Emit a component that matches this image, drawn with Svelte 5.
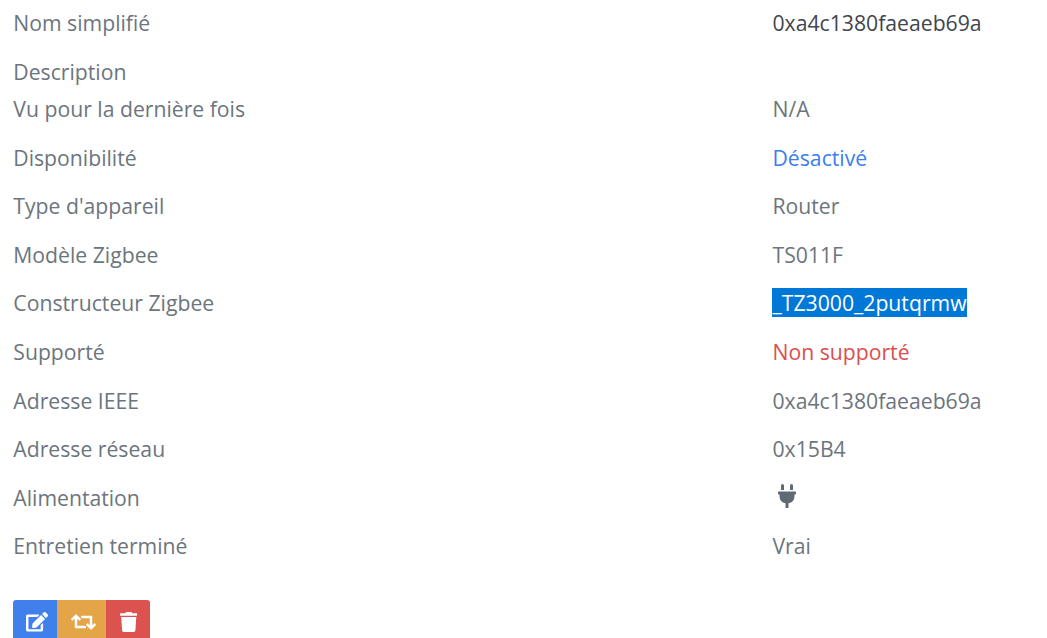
<script lang="ts">
  const rows = [
    { label: "Nom simplifié", value: "0xa4c1380faeaeb69a", kind: "dark" },
    { label: "Description", value: "", kind: "empty" },
    { label: "Vu pour la dernière fois", value: "N/A", kind: "" },
    { label: "Disponibilité", value: "Désactivé", kind: "blue" },
    { label: "Type d'appareil", value: "Router", kind: "" },
    { label: "Modèle Zigbee", value: "TS011F", kind: "" },
    { label: "Constructeur Zigbee", value: "_TZ3000_2putqrmw", kind: "selected" },
    { label: "Supporté", value: "Non supporté", kind: "red" },
    { label: "Adresse IEEE", value: "0xa4c1380faeaeb69a", kind: "" },
    { label: "Adresse réseau", value: "0x15B4", kind: "" },
    { label: "Alimentation", value: "", kind: "power" },
    { label: "Entretien terminé", value: "Vrai", kind: "" }
  ];
</script>

<div class="device">
  <dl class="info">
    {#each rows as row}
      <div class="row {row.kind}">
        <dt>{row.label}</dt>
        <dd>
          {#if row.kind === "power"}
            <svg class="plug" viewBox="0 0 384 512" aria-hidden="true">
              <path fill="currentColor" d="M320,32a32,32,0,0,0-64,0v96h64Zm48,128H16A16,16,0,0,0,0,176v32a16,16,0,0,0,16,16H32v32A160.07,160.07,0,0,0,160,412.8V512h64V412.8A160.07,160.07,0,0,0,352,256V224h16a16,16,0,0,0,16-16V176A16,16,0,0,0,368,160ZM128,32a32,32,0,0,0-64,0v96h64Z" />
            </svg>
          {:else if row.kind === "selected"}
            <span class="selection">{row.value}</span>
          {:else}
            {row.value}
          {/if}
        </dd>
      </div>
    {/each}
  </dl>

  <div class="actions">
    <button class="edit" aria-label="Modifier">
      <svg width="22" height="19.6" viewBox="0 0 576 512" aria-hidden="true">
        <path fill="currentColor" d="M402.6 83.2l90.2 90.2c3.8 3.8 3.8 10 0 13.8L274.4 405.6l-92.8 10.3c-12.4 1.4-22.9-9.1-21.5-21.5l10.3-92.8L388.8 83.2c3.8-3.8 10-3.8 13.8 0zm162-22.9l-48.8-48.8c-15.2-15.2-39.9-15.2-55.2 0l-35.4 35.4c-3.8 3.8-3.8 10 0 13.8l90.2 90.2c3.8 3.8 10 3.8 13.8 0l35.4-35.4c15.2-15.3 15.2-40 0-55.2zM384 346.2V448H64V128h229.8c3.2 0 6.2-1.3 8.5-3.5l40-40c7.6-7.6 2.2-20.5-8.5-20.5H48C21.5 64 0 85.5 0 112v352c0 26.5 21.5 48 48 48h352c26.5 0 48-21.5 48-48V306.2c0-10.7-12.9-16-20.5-8.5l-40 40c-2.2 2.3-3.5 5.3-3.5 8.5z" />
      </svg>
    </button>
    <button class="swap" aria-label="Échanger">
      <svg width="25" height="20" viewBox="0 0 640 512" aria-hidden="true">
        <path fill="currentColor" d="M629.657 343.598L528.971 444.284c-9.373 9.372-24.568 9.372-33.941 0L394.343 343.598c-9.373-9.373-9.373-24.569 0-33.941l10.823-10.823c9.562-9.562 25.133-9.34 34.419.492L480 342.118V160H292.451a24.005 24.005 0 0 1-16.971-7.029l-16-16C244.361 121.851 255.069 96 276.451 96H520c13.255 0 24 10.745 24 24v222.118l40.416-43.792c9.285-9.831 24.856-10.054 34.419-.492l10.823 10.823c9.372 9.372 9.372 24.569-.001 33.941zm-265.138 15.431A23.999 23.999 0 0 0 347.548 352H160V169.881l40.416 43.792c9.286 9.831 24.856 10.054 34.419.491l10.822-10.822c9.373-9.373 9.373-24.569 0-33.941L144.971 67.716c-9.373-9.373-24.569-9.373-33.941 0L10.343 168.402c-9.373 9.373-9.373 24.569 0 33.941l10.822 10.822c9.562 9.562 25.133 9.34 34.419-.491L96 169.881V392c0 13.255 10.745 24 24 24h243.549c21.382 0 32.09-25.851 16.971-40.971l-16.001-16z" />
      </svg>
    </button>
    <button class="remove" aria-label="Supprimer">
      <svg width="17.5" height="20" viewBox="0 0 448 512" aria-hidden="true">
        <path fill="currentColor" d="M432 32H312l-9.4-18.7A24 24 0 0 0 281.1 0H166.8a23.72 23.72 0 0 0-21.4 13.3L136 32H16A16 16 0 0 0 0 48v32a16 16 0 0 0 16 16h416a16 16 0 0 0 16-16V48a16 16 0 0 0-16-16zM53.2 467a48 48 0 0 0 47.9 45h245.8a48 48 0 0 0 47.9-45L416 128H32z" />
      </svg>
    </button>
  </div>
</div>

<style>
  :global(html), :global(body) { overflow: hidden; background: #fff; }

  .device {
    padding: 7.2px 13.3px 0;
    font-family: "Open Sans", "Noto Sans", sans-serif;
    font-size: 21.2px;
    line-height: 32.4px;
    color: #6c757d;
  }

  .info { margin: 0; }
  .row { display: grid; grid-template-columns: 759.2px 1fr; margin-bottom: 16.2px; }
  .row.empty { margin-bottom: 4.8px; }
  dt { font-weight: 400; }
  dd { margin: 0; height: 32.4px; }

  .dark dd { color: #3f464d; }
  .blue dd { color: #3b7eee; }
  .red dd { color: #dc4e4e; }

  .selection { background: #0078d7; color: #fff; display: inline-block; height: 29px; line-height: 29px; }

  .plug { width: 18px; height: 24px; margin: 2px 0 0 6px; color: #5f6a75; display: block; }

  .actions { display: flex; margin-top: 37px; }
  .actions button {
    border: none; padding: 0; height: 44px; color: #fff;
    display: flex; align-items: center; justify-content: center;
  }
  .edit { width: 44px; background: #4080ec; border-radius: 3px 0 0 3px; }
  .actions .edit, .actions .swap { padding-left: 3px; }
  .swap { width: 49px; background: #e4a548; }
  .remove { width: 44px; background: #dc524f; border-radius: 0 3px 3px 0; }
</style>
